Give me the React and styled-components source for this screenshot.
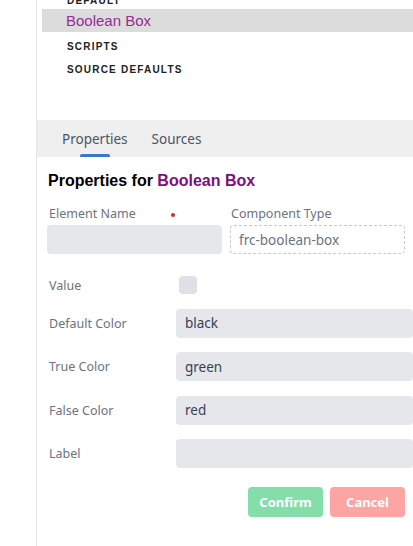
import React from "react";
import styled, { createGlobalStyle } from "styled-components";

const Global = createGlobalStyle`
  html, body { margin: 0; padding: 0; background: #fff; }
  body { font-family: "Noto Sans", "Open Sans", sans-serif; }
  * { box-sizing: border-box; }
`;

const Page = styled.div`
  display: flex;
  width: 413px;
  height: 546px;
  overflow: hidden;
  background: #fff;
`;

const Gutter = styled.div`
  width: 37px;
  flex: none;
  border-right: 1px solid #e6e6e6;
`;

const Main = styled.div`
  flex: 1;
  min-width: 0;
  display: flex;
  flex-direction: column;
`;

const TreePanel = styled.div`
  height: 120px;
  overflow: hidden;
  padding-left: 5px;
`;

const TreeList = styled.ul`
  list-style: none;
  margin: -14px 0 0;
  padding: 0;
`;

const TreeItem = styled.li`
  height: 23px;
  display: flex;
  align-items: center;
  padding-left: ${(p) => (p.$selected ? "24px" : "25px")};
  padding-top: ${(p) => (p.$selected ? "0" : "6px")};
  background: ${(p) => (p.$selected ? "#dcdcdc" : "transparent")};
  font-family: "Liberation Sans", Arial, sans-serif;
  font-size: ${(p) => (p.$selected ? "15px" : "10px")};
  font-weight: ${(p) => (p.$selected ? 400 : 700)};
  letter-spacing: ${(p) => (p.$selected ? "0" : "1.2px")};
  text-transform: ${(p) => (p.$selected ? "none" : "uppercase")};
  color: ${(p) => (p.$selected ? "#942d94" : "#222")};
`;

const TabBar = styled.div`
  height: 37px;
  background: #efefef;
  display: flex;
  align-items: stretch;
  gap: 24px;
  padding-left: 25px;
`;

const Tab = styled.div`
  position: relative;
  display: flex;
  align-items: center;
  font-size: 13.5px;
  color: #4b5563;
  &::after {
    content: "";
    display: ${(p) => (p.$active ? "block" : "none")};
    position: absolute;
    left: 50%;
    bottom: 0;
    width: 30px;
    height: 3px;
    margin-left: -15px;
    border-radius: 2px 2px 0 0;
    background: #3a78c9;
  }
`;

const Content = styled.div`
  padding: 13px 8px 0 10px;
`;

const Heading = styled.h2`
  margin: 0 0 0 1px;
  font-family: "Liberation Sans", Arial, sans-serif;
  font-size: 16px;
  font-weight: 700;
  line-height: 22px;
  color: #000;
`;

const Accent = styled.span`
  color: #7d0f7d;
`;

const TwoCol = styled.div`
  display: grid;
  grid-template-columns: 175px 175px;
  column-gap: 8px;
  margin-top: 13px;
`;

const Field = styled.div`
  display: flex;
  flex-direction: column;
`;

const FieldLabel = styled.div`
  position: relative;
  height: 18px;
  line-height: 18px;
  font-size: 12.5px;
  color: #6b7280;
  padding-left: ${(p) => (p.$indent ? "2px" : "1px")};
  margin-bottom: 2px;
`;

const RequiredDot = styled.span`
  position: absolute;
  left: 124px;
  top: 8px;
  width: 4px;
  height: 4px;
  border-radius: 50%;
  background: #dc2626;
`;

const Input = styled.div`
  height: 29px;
  border-radius: 4px;
  background: ${(p) => (p.$dashed ? "#fff" : "#e5e7eb")};
  border: ${(p) => (p.$dashed ? "1px dashed #c8c8c8" : "none")};
  display: flex;
  align-items: center;
  padding-left: ${(p) => (p.$dashed ? "8px" : "9px")};
  font-size: 13.5px;
  color: ${(p) => (p.$dashed ? "#6b7280" : "#374151")};
`;

const PropRows = styled.div`
  display: flex;
  flex-direction: column;
  margin-top: 21px;
  margin-right: -8px;
`;

const PropRow = styled.div`
  display: grid;
  grid-template-columns: 129px 1fr;
  align-items: center;
  height: ${(p) => p.$h || "30px"};
  margin-bottom: ${(p) => p.$mb || "13.5px"};
`;

const PropLabel = styled.div`
  font-size: 12.5px;
  color: #6b7280;
  padding-left: 2px;
`;

const Check = styled.div`
  width: 18px;
  height: 18px;
  border-radius: 4px;
  background: #dfe1e6;
  margin-left: 3px;
`;

const Actions = styled.div`
  display: flex;
  justify-content: flex-end;
  gap: 7px;
  margin-top: 5px;
`;

const Button = styled.button`
  width: 75px;
  height: 30px;
  border: none;
  border-radius: 4px;
  font-family: "Noto Sans", "Open Sans", sans-serif;
  font-size: 13px;
  font-weight: 700;
  color: #fff;
  background: ${(p) => (p.$variant === "confirm" ? "#84deaa" : "#fca5a3")};
`;

export default function App() {
  const rows = [
    ["Default Color", "black"],
    ["True Color", "green"],
    ["False Color", "red"],
    ["Label", ""],
  ];
  return (
    <>
      <Global />
      <Page>
        <Gutter />
        <Main>
          <TreePanel>
            <TreeList>
              <TreeItem>Default</TreeItem>
              <TreeItem $selected>Boolean Box</TreeItem>
              <TreeItem>Scripts</TreeItem>
              <TreeItem>Source Defaults</TreeItem>
            </TreeList>
          </TreePanel>
          <TabBar>
            <Tab $active>Properties</Tab>
            <Tab>Sources</Tab>
          </TabBar>
          <Content>
            <Heading>
              Properties for <Accent>Boolean Box</Accent>
            </Heading>
            <TwoCol>
              <Field>
                <FieldLabel $indent>
                  Element Name
                  <RequiredDot />
                </FieldLabel>
                <Input />
              </Field>
              <Field>
                <FieldLabel>Component Type</FieldLabel>
                <Input $dashed>frc-boolean-box</Input>
              </Field>
            </TwoCol>
            <PropRows>
              <PropRow $h="20px" $mb="13px">
                <PropLabel>Value</PropLabel>
                <Check />
              </PropRow>
              {rows.map(([label, value]) => (
                <PropRow key={label}>
                  <PropLabel>{label}</PropLabel>
                  <Input>{value}</Input>
                </PropRow>
              ))}
            </PropRows>
            <Actions>
              <Button $variant="confirm">Confirm</Button>
              <Button $variant="cancel">Cancel</Button>
            </Actions>
          </Content>
        </Main>
      </Page>
    </>
  );
}
